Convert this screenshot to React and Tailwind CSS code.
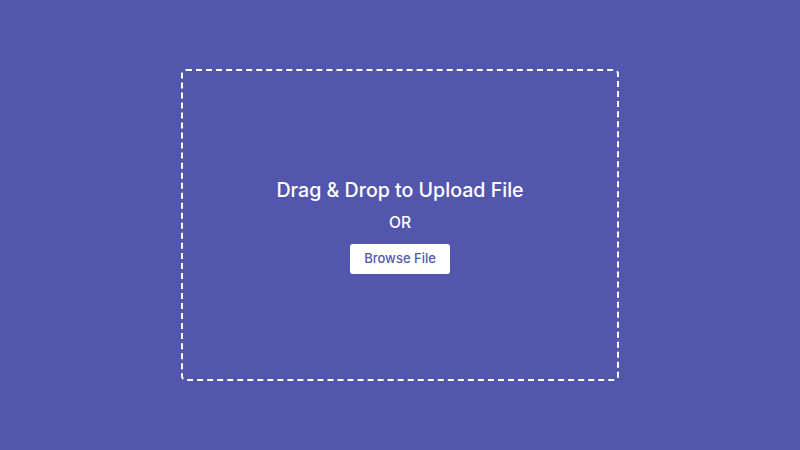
export default function App() {
  return (
    <div
      className="w-full h-[450px] bg-[#5256ad] flex items-center justify-center"
      style={{ fontFamily: "Inter, 'Noto Sans', sans-serif" }}
    >
      <div className="w-[438px] h-[312px] border-2 border-dashed border-white rounded-[5px] flex flex-col items-center pt-[105px]">
        <header className="text-white text-[19.6px] font-medium leading-[28px]">
          Drag &amp; Drop to Upload File
        </header>
        <span className="text-white text-[15.6px] font-medium leading-[24px] mt-[7px]">OR</span>
        <button className="mt-[9px] bg-white text-[#5256ad] text-[13px] font-medium rounded-[3px] h-[30px] w-[100px] whitespace-nowrap flex items-center justify-center">
          Browse File
        </button>
      </div>
    </div>
  );
}
